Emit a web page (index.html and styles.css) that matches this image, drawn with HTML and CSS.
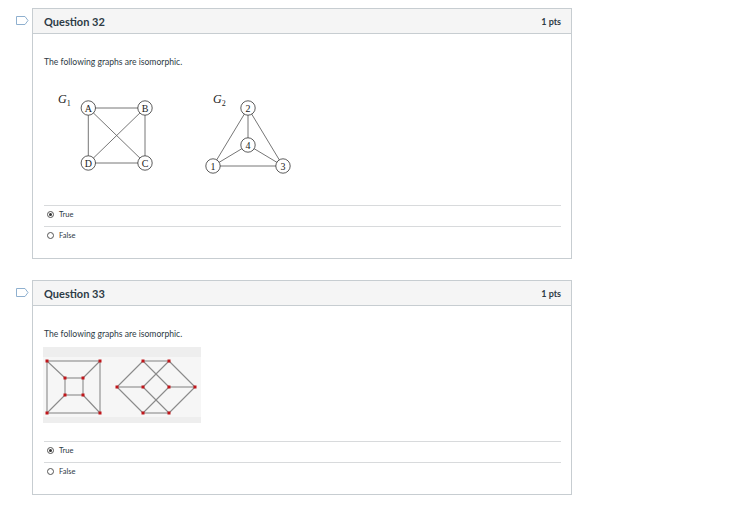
FILE: index.html
```html
<!DOCTYPE html>
<html>
<head>
<meta charset="utf-8">
<link rel="stylesheet" href="styles.css">
</head>
<body>
<div class="page">
  <div class="question">
    <div class="flag"><svg width="13" height="9" viewBox="0 0 13 9"><path d="M0.5 0.5 H9 L12 4.5 L9 8.5 H0.5 Z" fill="none" stroke="#8fb0cf" stroke-width="1"/></svg></div>
    <div class="card">
      <div class="card-header"><span class="q-title">Question 32</span><span class="q-pts">1 pts</span></div>
      <div class="card-body">
        <p class="q-text">The following graphs are isomorphic.</p>
        <svg class="graph1" width="260" height="95" viewBox="0 0 260 95">
          <text x="14" y="21" class="glabel">G<tspan class="gsub" dy="3">1</tspan></text>
          <text x="169" y="21" class="glabel">G<tspan class="gsub" dy="3">2</tspan></text>
          <g stroke="#666" stroke-width="0.9">
            <line x1="44.3" y1="26" x2="101" y2="26"/>
            <line x1="44.3" y1="26" x2="44.3" y2="81"/>
            <line x1="44.3" y1="26" x2="101" y2="81"/>
            <line x1="101" y1="26" x2="44.3" y2="81"/>
            <line x1="101" y1="26" x2="101" y2="81"/>
            <line x1="44.3" y1="81" x2="101" y2="81"/>
            <line x1="204" y1="26" x2="204" y2="63"/>
            <line x1="204" y1="26" x2="169" y2="84"/>
            <line x1="204" y1="26" x2="239" y2="84"/>
            <line x1="204" y1="63" x2="169" y2="84"/>
            <line x1="204" y1="63" x2="239" y2="84"/>
            <line x1="169" y1="84" x2="239" y2="84"/>
          </g>
          <g fill="#fff" stroke="#333" stroke-width="0.8">
            <circle cx="44.3" cy="26" r="7.2"/>
            <circle cx="101" cy="26" r="7.2"/>
            <circle cx="44.3" cy="81" r="7.2"/>
            <circle cx="101" cy="81" r="7.2"/>
            <circle cx="204" cy="26" r="7.2"/>
            <circle cx="204" cy="63" r="7.2"/>
            <circle cx="169" cy="84" r="7.2"/>
            <circle cx="239" cy="84" r="7.2"/>
          </g>
          <g class="nlabel" text-anchor="middle">
            <text x="44.3" y="29.5">A</text>
            <text x="101" y="29.5">B</text>
            <text x="44.3" y="84.5">D</text>
            <text x="101" y="84.5">C</text>
            <text x="204" y="29.5">2</text>
            <text x="204" y="66.5">4</text>
            <text x="169" y="87.5">1</text>
            <text x="239" y="87.5">3</text>
          </g>
        </svg>
        <div class="answers a32">
          <div class="answer"><span class="radio checked"></span><span class="a-label">True</span></div>
          <div class="answer"><span class="radio"></span><span class="a-label">False</span></div>
        </div>
      </div>
    </div>
  </div>

  <div class="question q2">
    <div class="flag"><svg width="13" height="9" viewBox="0 0 13 9"><path d="M0.5 0.5 H9 L12 4.5 L9 8.5 H0.5 Z" fill="none" stroke="#8fb0cf" stroke-width="1"/></svg></div>
    <div class="card">
      <div class="card-header"><span class="q-title">Question 33</span><span class="q-pts">1 pts</span></div>
      <div class="card-body">
        <p class="q-text">The following graphs are isomorphic.</p>
        <svg class="graph2" width="158" height="76" viewBox="0 0 158 76">
          <rect x="0" y="0" width="158" height="76" fill="#eeeeee"/>
          <rect x="0" y="10" width="158" height="60" fill="#f6f6f6"/>
          <g stroke="#8a8a8a" stroke-width="1.1" fill="none">
            <rect x="4" y="14" width="53" height="52"/>
            <rect x="22" y="31" width="18" height="17"/>
            <line x1="4" y1="14" x2="22" y2="31"/>
            <line x1="57" y1="14" x2="40" y2="31"/>
            <line x1="4" y1="66" x2="22" y2="48"/>
            <line x1="57" y1="66" x2="40" y2="48"/>
            <line x1="100" y1="14" x2="126" y2="14"/>
            <line x1="100" y1="14" x2="74" y2="40"/>
            <line x1="100" y1="14" x2="126" y2="40"/>
            <line x1="126" y1="14" x2="152" y2="40"/>
            <line x1="126" y1="14" x2="100" y2="40"/>
            <line x1="74" y1="40" x2="100" y2="40"/>
            <line x1="126" y1="40" x2="152" y2="40"/>
            <line x1="74" y1="40" x2="100" y2="66"/>
            <line x1="152" y1="40" x2="126" y2="66"/>
            <line x1="100" y1="66" x2="126" y2="66"/>
            <line x1="100" y1="40" x2="126" y2="66"/>
            <line x1="126" y1="40" x2="100" y2="66"/>
          </g>
          <g fill="#c0161b">
            <rect x="2.5" y="12.5" width="3" height="3"/>
            <rect x="55.5" y="12.5" width="3" height="3"/>
            <rect x="2.5" y="64.5" width="3" height="3"/>
            <rect x="55.5" y="64.5" width="3" height="3"/>
            <rect x="20.5" y="29.5" width="3" height="3"/>
            <rect x="38.5" y="29.5" width="3" height="3"/>
            <rect x="20.5" y="46.5" width="3" height="3"/>
            <rect x="38.5" y="46.5" width="3" height="3"/>
            <rect x="98.5" y="12.5" width="3" height="3"/>
            <rect x="124.5" y="12.5" width="3" height="3"/>
            <rect x="72.5" y="38.5" width="3" height="3"/>
            <rect x="98.5" y="38.5" width="3" height="3"/>
            <rect x="124.5" y="38.5" width="3" height="3"/>
            <rect x="150.5" y="38.5" width="3" height="3"/>
            <rect x="98.5" y="64.5" width="3" height="3"/>
            <rect x="124.5" y="64.5" width="3" height="3"/>
          </g>
        </svg>
        <div class="answers a33">
          <div class="answer"><span class="radio checked"></span><span class="a-label">True</span></div>
          <div class="answer"><span class="radio"></span><span class="a-label">False</span></div>
        </div>
      </div>
    </div>
  </div>
</div>
</body>
</html>
```

FILE: styles.css
```css
html, body {
  margin: 0;
  padding: 0;
  background: #fff;
}
body {
  font-family: Lato, "Liberation Sans", sans-serif;
  color: #2d3b45;
}
.page {
  padding-top: 8px;
}
.question {
  display: flex;
  align-items: flex-start;
}
.q2 {
  margin-top: 21px;
}
.flag {
  width: 32px;
  display: flex;
  justify-content: flex-start;
  padding-top: 8px;
  padding-left: 16px;
  box-sizing: border-box;
}
.flag svg {
  display: block;
}
.card {
  width: 540px;
  border: 1px solid #c7cdd1;
  box-sizing: border-box;
}
.card-header {
  height: 24px;
  background: #f5f5f5;
  border-bottom: 1px solid #c7cdd1;
  display: flex;
  align-items: center;
  justify-content: space-between;
  padding: 0 10px 0 11px;
}
.q-title {
  font-weight: 700;
  font-size: 11px;
  color: #2d3b45;
}
.q-pts {
  font-weight: 700;
  font-size: 9px;
  color: #2d3b45;
}
.card-body {
  padding: 23px 10px 11px 11px;
}
.q-text {
  margin: 0;
  font-size: 8.6px;
  line-height: 10px;
  color: #2d3b45;
}
.graph1 {
  display: block;
  margin-top: 15px;
}
.graph2 {
  display: block;
  margin-top: 8px;
  margin-left: -1px;
}
.glabel {
  font-family: "Liberation Serif", serif;
  font-style: italic;
  font-size: 12px;
  fill: #222;
}
.gsub {
  font-style: normal;
  font-size: 8px;
}
.nlabel text {
  font-family: "Liberation Serif", serif;
  font-size: 10px;
  fill: #222;
}
.a32 {
  margin-top: 28px;
}
.a33 {
  margin-top: 18px;
}
.answer {
  height: 20px;
  box-sizing: content-box;
  border-top: 1px solid #d8dadc;
  display: flex;
  align-items: center;
  padding-left: 3px;
  padding-bottom: 0;
}
.answer > span {
  margin-top: -3px;
}
.radio {
  width: 5px;
  height: 5px;
  border: 1px solid #555;
  border-radius: 50%;
  position: relative;
  margin-right: 5px;
}
.radio.checked::after {
  content: "";
  position: absolute;
  left: 1px;
  top: 1px;
  width: 3px;
  height: 3px;
  border-radius: 50%;
  background: #333;
}
.a-label {
  font-size: 7.5px;
  color: #2d3b45;
}
```
